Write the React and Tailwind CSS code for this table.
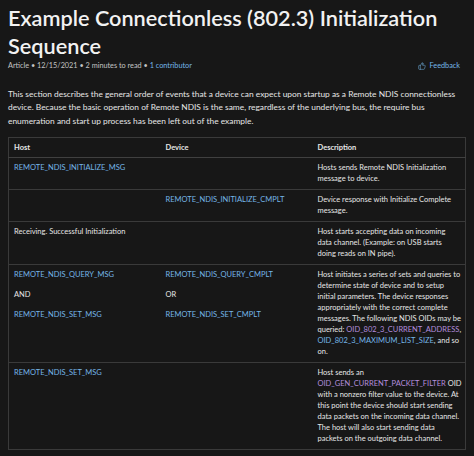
import React from 'react';
import { ThumbsUp } from 'lucide-react';

const link = 'text-[#75b6e7]';
const visited = 'text-[#b48ede]';

// description lines are kept as in the original layout
const rows = [
  {
    host: [<span className={link}>REMOTE_NDIS_INITIALIZE_MSG</span>],
    device: [],
    desc: ['Hosts sends Remote NDIS Initialization', 'message to device.'],
  },
  {
    host: [],
    device: [<span className={link}>REMOTE_NDIS_INITIALIZE_CMPLT</span>],
    desc: ['Device response with Initialize Complete', 'message.'],
  },
  {
    host: [<span>Receiving. Successful Initialization</span>],
    device: [],
    desc: ['Host starts accepting data on incoming', 'data channel. (Example: on USB starts', 'doing reads on IN pipe).'],
  },
  {
    host: [
      <span className={link}>REMOTE_NDIS_QUERY_MSG</span>,
      <span>AND</span>,
      <span className={link}>REMOTE_NDIS_SET_MSG</span>,
    ],
    device: [
      <span className={link}>REMOTE_NDIS_QUERY_CMPLT</span>,
      <span>OR</span>,
      <span className={link}>REMOTE_NDIS_SET_CMPLT</span>,
    ],
    desc: [
      'Host initiates a series of sets and queries to',
      'determine state of device and to setup',
      'initial parameters. The device responses',
      'appropriately with the correct complete',
      'messages. The following NDIS OIDs may be',
      <>
        queried: <span className={visited}>OID_802_3_CURRENT_ADDRESS</span>,
      </>,
      <>
        <span className={link}>OID_802_3_MAXIMUM_LIST_SIZE</span>, and so
      </>,
      'on.',
    ],
  },
  {
    host: [<span className={link}>REMOTE_NDIS_SET_MSG</span>],
    device: [],
    desc: [
      'Host sends an',
      <>
        <span className={visited}>OID_GEN_CURRENT_PACKET_FILTER</span> OID
      </>,
      'with a nonzero filter value to the device. At',
      'this point the device should start sending',
      'data packets on the incoming data channel.',
      'The host will also start sending data',
      'packets on the outgoing data channel.',
    ],
  },
];

const Stack = ({ items }) => (
  <div className="flex flex-col gap-[9px]">
    {items.map((it, i) => (
      <div key={i}>{it}</div>
    ))}
  </div>
);

export default function App() {
  return (
    <div
      className="min-h-screen bg-[#171717] text-[#e6e6e6] px-[8px] pt-[4px]"
      style={{ fontFamily: '"Segoe UI", Lato, sans-serif' }}
    >
      <h1 className="text-[21.7px] leading-[28px] font-semibold text-[#f2f2f2]">
        Example Connectionless (802.3) Initialization Sequence
      </h1>

      <div className="flex items-center justify-between text-[7.3px] leading-[10px] text-[#c4c4c4] mt-[1px] pr-[6px]">
        <div>
          Article • 12/15/2021 • 2 minutes to read • <span className={link}>1 contributor</span>
        </div>
        <div className={`flex items-center gap-[3px] ${link}`}>
          <ThumbsUp size={8} strokeWidth={1.6} />
          <span>Feedback</span>
        </div>
      </div>

      <p className="text-[8.4px] leading-[13.3px] mt-[17px]">
        This section describes the general order of events that a device can expect upon startup as a Remote NDIS
        connectionless device. Because the basic operation of Remote NDIS is the same, regardless of the underlying bus,
        the require bus enumeration and start up process has been left out of the example.
      </p>

      <table className="w-full table-fixed border-collapse border border-[#3a3a3a] mt-[9px] text-[7.5px] leading-[11px]">
        <thead>
          <tr className="border-b border-[#404040]">
            <th className="w-[152px] text-left font-bold pl-[5px] pr-[3px] py-[4px]">Host</th>
            <th className="w-[152px] text-left font-bold pl-[5px] pr-[3px] py-[4px]">Device</th>
            <th className="text-left font-bold pl-[5px] pr-[3px] py-[4px]">Description</th>
          </tr>
        </thead>
        <tbody>
          {rows.map((r, i) => (
            <tr key={i} className="border-b border-[#3a3a3a] align-top">
              <td className="pl-[5px] pr-[3px] py-[4.5px]">
                <Stack items={r.host} />
              </td>
              <td className="pl-[5px] pr-[3px] py-[4.5px]">
                <Stack items={r.device} />
              </td>
              <td className="pl-[5px] pr-[3px] py-[4.5px]">
                {r.desc.map((line, j) => (
                  <div key={j} className="whitespace-nowrap">
                    {line}
                  </div>
                ))}
              </td>
            </tr>
          ))}
        </tbody>
      </table>
    </div>
  );
}
